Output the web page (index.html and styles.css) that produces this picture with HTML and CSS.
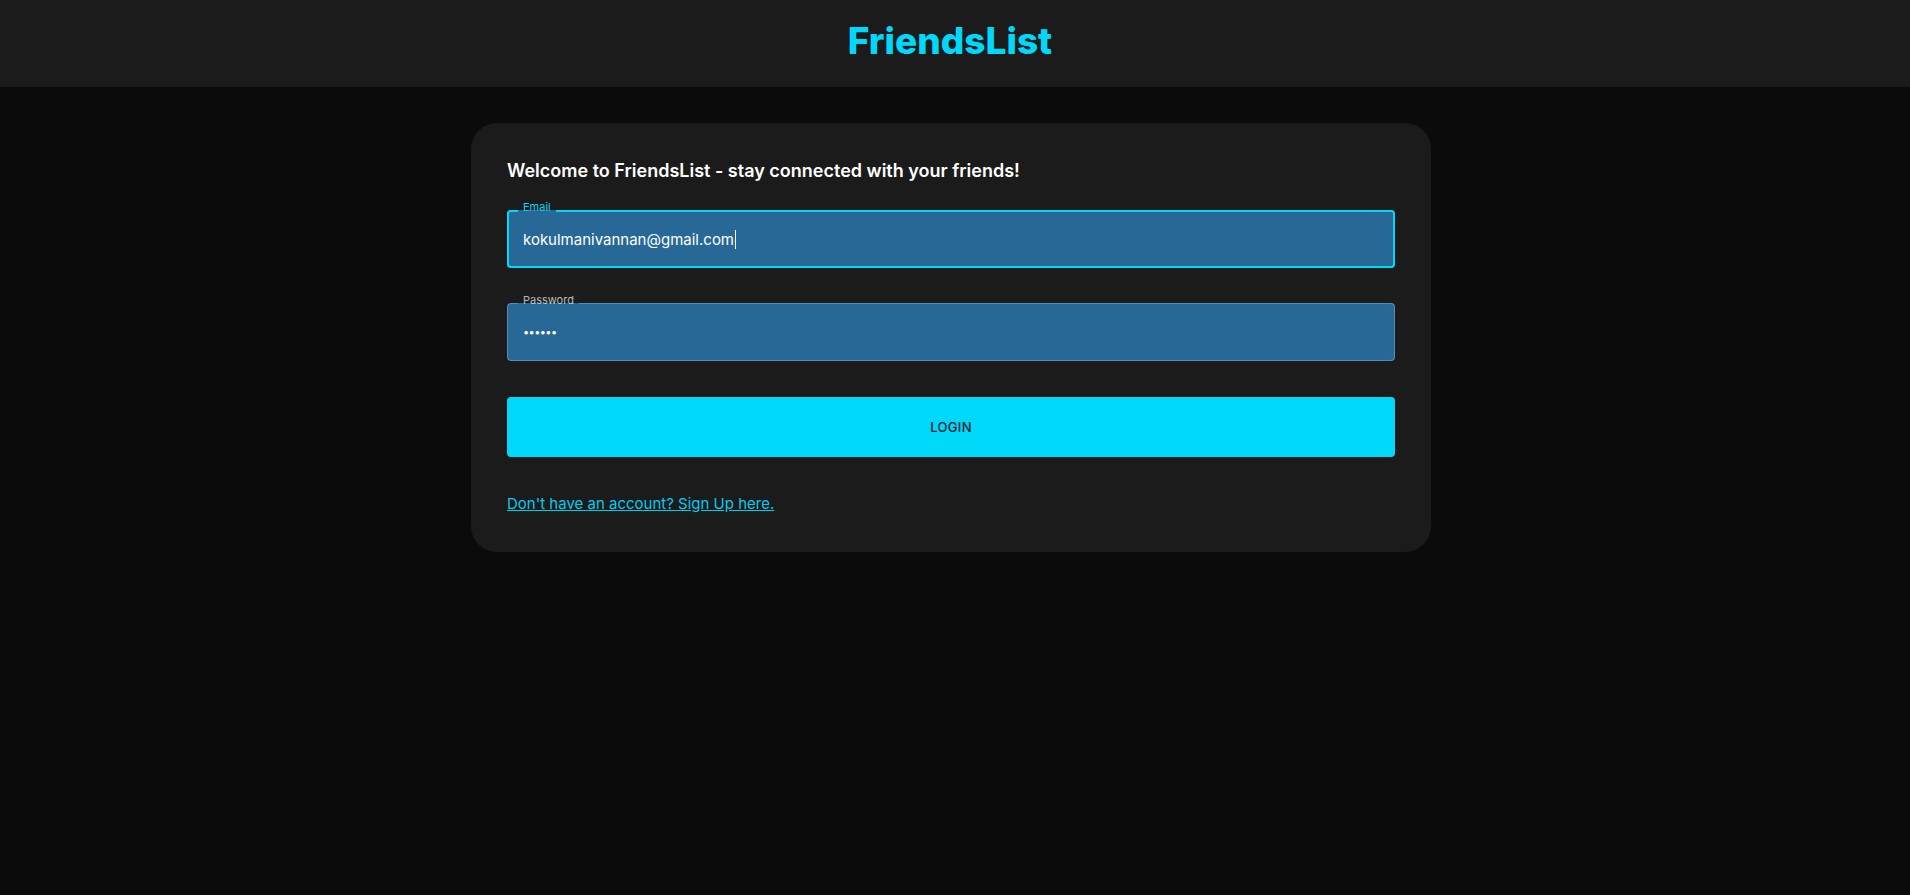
FILE: index.html
```
<!DOCTYPE html>
<html lang="en">
<head>
    <meta charset="UTF-8">
    <meta name="viewport" content="width=device-width, initial-scale=1.0">
    <title>FriendsList - Login</title>
    <link rel="stylesheet" href="styles.css">
</head>
<body>
    <header class="topbar">
        <h1 class="brand">FriendsList</h1>
    </header>

    <main class="main">
        <div class="card">
            <h2 class="welcome">Welcome to FriendsList - stay connected with your friends!</h2>

            <div class="field focused">
                <label class="field-label">Email</label>
                <div class="field-box">
                    <span class="field-value">kokulmanivannan@gmail.com</span><span class="caret"></span>
                    <fieldset class="outline"><legend><span>Email</span></legend></fieldset>
                </div>
            </div>

            <div class="field">
                <label class="field-label">Password</label>
                <div class="field-box">
                    <span class="field-value dots">&bull;&bull;&bull;&bull;&bull;&bull;</span>
                    <fieldset class="outline"><legend><span>Password</span></legend></fieldset>
                </div>
            </div>

            <button class="login-btn" type="button">Login</button>

            <a class="signup-link" href="#">Don't have an account? Sign Up here.</a>
        </div>
    </main>
</body>
</html>
```

FILE: styles.css
```
body {
    margin: 0;
    background-color: #0b0b0b;
    font-family: Inter, "Noto Sans", sans-serif;
    color: #ffffff;
}

.topbar {
    height: 87px;
    background-color: #1b1b1b;
    display: flex;
    align-items: center;
    justify-content: center;
    padding: 0 10px 6px 0;
    box-sizing: border-box;
}

.brand {
    margin: 0;
    font-size: 37px;
    font-weight: 800;
    color: #00d8fa;
    letter-spacing: 0;
}

.main {
    display: flex;
    justify-content: center;
    padding: 36px 8px 0 0;
}

.card {
    width: 960px;
    box-sizing: border-box;
    padding: 36px;
    background-color: #1b1b1b;
    border-radius: 26px;
    display: flex;
    flex-direction: column;
}

.welcome {
    margin: 0 0 28px;
    font-size: 18px;
    line-height: 23px;
    font-weight: 600;
    color: #ffffff;
}

.field {
    position: relative;
    margin-bottom: 35px;
}

.field-label {
    position: absolute;
    left: 16px;
    top: -10px;
    font-size: 11px;
    line-height: 14px;
    color: rgba(255, 255, 255, 0.7);
    z-index: 1;
}

.field.focused .field-label {
    color: #00d8fa;
}

.field-box {
    position: relative;
    height: 58px;
    background-color: #276896;
    border-radius: 4px;
    display: flex;
    align-items: center;
    padding: 0 16px;
}

.field-value {
    font-size: 15px;
    color: #ffffff;
}

.dots {
    font-size: 11px;
    letter-spacing: -0.6px;
}

.caret {
    display: inline-block;
    width: 1px;
    height: 19px;
    background-color: #ffffff;
    margin-left: 1px;
}

.outline {
    position: absolute;
    inset: -5px 0 0 0;
    margin: 0;
    padding: 0 10px;
    border: 1px solid rgba(255, 255, 255, 0.23);
    border-radius: 4px;
    pointer-events: none;
}

.field.focused .outline {
    border: 2px solid #00d8fa;
    padding: 0 9px;
}

.outline legend {
    padding: 0;
    height: 11px;
    font-size: 11px;
    line-height: 11px;
    visibility: hidden;
}

.outline legend span {
    padding: 0 5px;
}

.login-btn {
    margin-top: 1px;
    height: 60px;
    border: none;
    border-radius: 4px;
    background-color: #00d8fa;
    color: #10202a;
    font-family: inherit;
    font-size: 13px;
    font-weight: 500;
    letter-spacing: 0.3px;
    text-transform: uppercase;
    cursor: pointer;
}

.signup-link {
    margin-top: 35px;
    align-self: flex-start;
    font-size: 15px;
    line-height: 24px;
    color: #00cdf0;
    text-decoration: underline;
}
```
